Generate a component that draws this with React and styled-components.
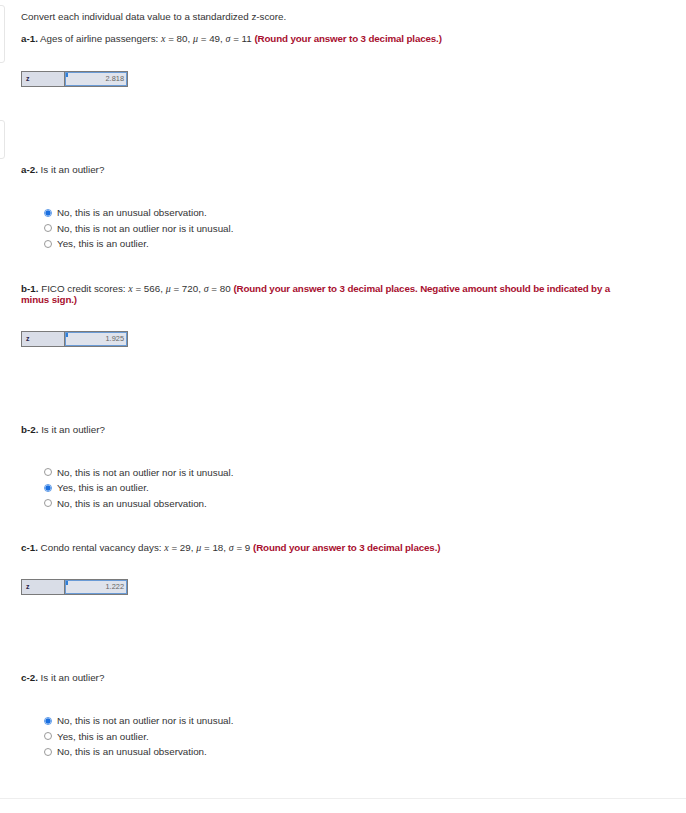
import styled, {createGlobalStyle} from "styled-components";

const GlobalStyle = createGlobalStyle`
  body {
    margin: 0;
    background: #ffffff;
    font-family: "Liberation Sans", Arial, sans-serif;
    color: #333333;
  }
`

const Page = styled.div`
  position: relative;
  width: 686px;
  min-height: 813px;
  padding: 11px 21px 0;
  box-sizing: border-box;
`

const SideTab = styled.div`
  position: absolute;
  left: -6px;
  width: 9px;
  border: 1px solid #e6e6e6;
  border-radius: 3px;
`

const Line = styled.p`
  margin: 0;
  max-width: 600px;
  font-size: 9.8px;
  line-height: 11px;
  margin-top: ${(p) => p.$gap || 0}px;
`

const Tag = styled.b`
  font-weight: 700;
  color: #1f1f1f;
`

const Note = styled.span`
  font-weight: 700;
  color: #a8102f;
  letter-spacing: -0.15px;
`

const Var = styled.i`
  font-family: "Liberation Serif", serif;
  font-style: italic;
  font-size: 10px;
  line-height: 11px;
`

const AnswerRow = styled.div`
  display: flex;
  width: 107px;
  height: 16px;
  margin-top: ${(p) => p.$gap}px;
  border: 1px solid #7a7a7a;
  box-sizing: border-box;
  background: #d9dde7;
`

const AnswerLabel = styled.div`
  width: 43px;
  box-sizing: border-box;
  padding-left: 4px;
  font-size: 7px;
  font-weight: 700;
  line-height: 14px;
  color: #2a1f4a;
  border-right: 1px solid #7a7a7a;
`

const AnswerField = styled.div`
  position: relative;
  flex: 1;
  border: 1px solid #6a9bd6;
  background: #dfe3ec;
  font-size: 7.4px;
  line-height: 12px;
  text-align: right;
  padding-right: 2px;
  color: #666;

  &::before {
    content: "";
    position: absolute;
    left: 0;
    top: 0;
    width: 2px;
    height: 4px;
    background: #2f7fd8;
  }
`

const Options = styled.div`
  display: flex;
  flex-direction: column;
  margin: 30px 0 0 23px;
`

const Option = styled.label`
  display: flex;
  align-items: center;
  gap: 5px;
  height: 15.5px;
  font-size: 9.8px;
  color: #333333;
`

const Dot = styled.span`
  width: 8px;
  height: 8px;
  border-radius: 50%;
  box-sizing: border-box;
  border: 1px solid ${(p) => (p.$on ? "#5d9ae8" : "#9a9a9a")};
  background: ${(p) => (p.$on ? "radial-gradient(circle, #1a6fe0 0 2.3px, #c9defa 2.8px)" : "#fff")};
`

const Footer = styled.div`
  margin: 38px -21px 0;
  border-top: 1px solid #eeeeee;
`

const sections = [
  {
    id: "a",
    intro: (
      <>
        <Tag>a-1.</Tag> Ages of airline passengers: <Var>x</Var> = 80, <Var>μ</Var> = 49, <Var>σ</Var> = 11{" "}
        <Note>(Round your answer to 3 decimal places.)</Note>
      </>
    ),
    value: "2.818",
    options: ["No, this is an unusual observation.", "No, this is not an outlier nor is it unusual.", "Yes, this is an outlier."],
    picked: 0,
  },
  {
    id: "b",
    intro: (
      <>
        <Tag>b-1.</Tag> FICO credit scores: <Var>x</Var> = 566, <Var>μ</Var> = 720, <Var>σ</Var> = 80{" "}
        <Note>(Round your answer to 3 decimal places. Negative amount should be indicated by a minus sign.)</Note>
      </>
    ),
    value: "1.925",
    options: ["No, this is not an outlier nor is it unusual.", "Yes, this is an outlier.", "No, this is an unusual observation."],
    picked: 1,
  },
  {
    id: "c",
    intro: (
      <>
        <Tag>c-1.</Tag> Condo rental vacancy days: <Var>x</Var> = 29, <Var>μ</Var> = 18, <Var>σ</Var> = 9{" "}
        <Note>(Round your answer to 3 decimal places.)</Note>
      </>
    ),
    value: "1.222",
    options: ["No, this is not an outlier nor is it unusual.", "Yes, this is an outlier.", "No, this is an unusual observation."],
    picked: 0,
  },
]

const App = () => {
  return (
    <Page>
      <GlobalStyle/>
      <SideTab style={{top: 5, height: 56}}/>
      <SideTab style={{top: 120, height: 37}}/>
      <Line>Convert each individual data value to a standardized z-score.</Line>
      {sections.map((s, i) => (
        <section key={s.id}>
          <Line $gap={i === 0 ? 11 : 31}>{s.intro}</Line>
          <AnswerRow $gap={i === 0 ? 27 : 26}>
            <AnswerLabel>z</AnswerLabel>
            <AnswerField>{s.value}</AnswerField>
          </AnswerRow>
          <Line $gap={77}><Tag>{s.id}-2.</Tag> Is it an outlier?</Line>
          <Options>
            {s.options.map((o, j) => (
              <Option key={o}>
                <Dot $on={j === s.picked}/>
                {o}
              </Option>
            ))}
          </Options>
        </section>
      ))}
      <Footer/>
    </Page>
  );
};

export default App
